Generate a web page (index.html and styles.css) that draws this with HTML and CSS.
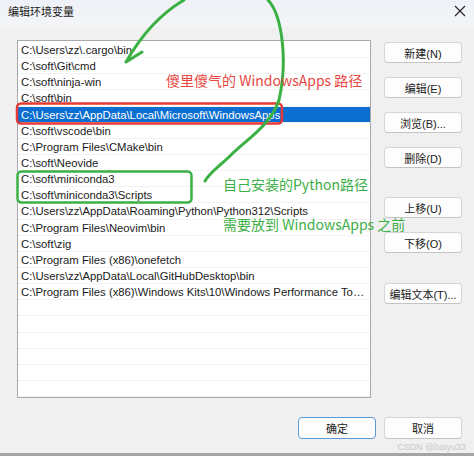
FILE: index.html
```html
<!DOCTYPE html>
<html lang="zh-CN">
<head>
  <meta charset="UTF-8" />
  <title>编辑环境变量</title>
  <link rel="stylesheet" href="styles.css">
</head>
<body>
  <div class="dialog">
    <div class="titlebar">
      <span class="title">编辑环境变量</span>
      <svg class="close" width="12" height="12" viewBox="0 0 12 12">
        <path d="M1 1 L11 11 M11 1 L1 11" stroke="#222" stroke-width="1.1" fill="none" />
      </svg>
    </div>

    <div class="main">
      <div class="list">
        <div class="row">C:\Users\zz\.cargo\bin</div>
        <div class="row">C:\soft\Git\cmd</div>
        <div class="row">C:\soft\ninja-win</div>
        <div class="row">C:\soft\bin</div>
        <div class="row selected">C:\Users\zz\AppData\Local\Microsoft\WindowsApps</div>
        <div class="row">C:\soft\vscode\bin</div>
        <div class="row">C:\Program Files\CMake\bin</div>
        <div class="row">C:\soft\Neovide</div>
        <div class="row">C:\soft\miniconda3</div>
        <div class="row">C:\soft\miniconda3\Scripts</div>
        <div class="row">C:\Users\zz\AppData\Roaming\Python\Python312\Scripts</div>
        <div class="row">C:\Program Files\Neovim\bin</div>
        <div class="row">C:\soft\zig</div>
        <div class="row">C:\Program Files (x86)\onefetch</div>
        <div class="row">C:\Users\zz\AppData\Local\GitHubDesktop\bin</div>
        <div class="row">C:\Program Files (x86)\Windows Kits\10\Windows Performance Toolkit\</div>
        <div class="row"></div>
        <div class="row"></div>
        <div class="row"></div>
        <div class="row"></div>
        <div class="row"></div>
        <div class="row"></div>
      </div>

      <div class="side">
        <div class="group">
          <button class="btn">新建(N)</button>
          <button class="btn">编辑(E)</button>
          <button class="btn">浏览(B)...</button>
          <button class="btn">删除(D)</button>
        </div>
        <div class="group move">
          <button class="btn">上移(U)</button>
          <button class="btn">下移(O)</button>
        </div>
        <button class="btn text-edit">编辑文本(T)...</button>
      </div>
    </div>

    <div class="footer">
      <button class="btn default">确定</button>
      <button class="btn">取消</button>
    </div>
    <div class="watermark">CSDN @baiyu33</div>
  </div>

  <!-- annotations drawn over the screenshot -->
  <svg class="marks" width="474" height="456" viewBox="0 0 474 456">
    <rect x="17" y="103.5" width="265" height="20" rx="4" stroke="#e53a35" stroke-width="2.5" fill="none" />
    <rect x="17.5" y="171.5" width="174" height="31" rx="4" stroke="#3bb143" stroke-width="2.5" fill="none" />
    <path d="M184 0 Q150 20 126 62 M126 62 L142 52" stroke="#3bb143" stroke-width="3" fill="none" stroke-linecap="round" />
    <path d="M268 0 C282 15 288 60 279 100 C271 125 246 140 231 155 C221 165 210 172 205 181" stroke="#3bb143" stroke-width="3" fill="none" stroke-linecap="round" />
  </svg>
  <div class="note red">傻里傻气的 WindowsApps 路径</div>
  <div class="note green first">自己安装的Python路径</div>
  <div class="note green second">需要放到 WindowsApps 之前</div>
</body>
</html>
```

FILE: styles.css
```css
body {
  margin: 0;
  width: 474px;
  height: 456px;
  overflow: hidden;
  background: #a4a4a4;
  font-family: 'Liberation Sans', 'Noto Sans CJK SC', sans-serif;
  font-size: 12px;
  color: #1a1a1a;
}
.dialog {
  height: 453px;
  background: #f0f0f0;
  display: flex;
  flex-direction: column;
  position: relative;
}
.titlebar {
  height: 27px;
  background: linear-gradient(to bottom, #eef1f7, #f4f5f8);
  display: flex;
  align-items: center;
  justify-content: space-between;
  padding: 0 8px 5px 8px;
  box-sizing: border-box;
}
.title {
  font-family: 'Noto Sans CJK SC', sans-serif;
  font-size: 11px;
}
.main {
  display: flex;
  gap: 13px;
  padding: 13px 12px 0 17px;
}
.list {
  width: 354px;
  height: 358px;
  box-sizing: border-box;
  background: #fff;
  border: 1px solid #a9a9a9;
  padding-top: 1px;
  overflow: hidden;
}
.row {
  height: 16.15px;
  line-height: 16px;
  padding: 0 5px 0 3px;
  box-sizing: border-box;
  border-bottom: 1px solid #f2f2f2;
  white-space: nowrap;
  overflow: hidden;
  text-overflow: ellipsis;
  font-size: 11.3px;
}
.row.selected {
  background: #0b6ed0;
  color: #fff;
}
.side {
  width: 78px;
  padding-top: 2px;
  display: flex;
  flex-direction: column;
}
.group {
  display: flex;
  flex-direction: column;
  gap: 14px;
}
.group.move {
  margin-top: 29px;
}
.text-edit {
  margin-top: 30px;
}
.btn {
  height: 21px;
  width: 78px;
  padding: 0;
  background: #fdfdfd;
  border: 1px solid #d6d6d6;
  border-bottom-color: #c4c4c4;
  border-radius: 4px;
  font-family: 'Liberation Sans', 'Noto Sans CJK SC', sans-serif;
  font-size: 11px;
  color: #1a1a1a;
  white-space: nowrap;
}
.footer {
  display: flex;
  justify-content: flex-end;
  gap: 8px;
  padding: 19px 12px 0 0;
}
.footer .btn {
  width: 78px;
  height: 22px;
}
.btn.default {
  border: 1px solid #5b9bd5;
}
.watermark {
  position: absolute;
  right: 8px;
  bottom: 1px;
  font-size: 9px;
  color: #c8c8c8;
}
.marks {
  position: absolute;
  top: 0;
  left: 0;
  pointer-events: none;
}
.note {
  position: absolute;
  font-family: 'Noto Sans CJK SC', sans-serif;
  font-size: 14px;
  line-height: 16px;
  white-space: nowrap;
}
.note.red {
  color: #e8473f;
  left: 166px;
  top: 72px;
}
.note.green {
  color: #3daf47;
  left: 223px;
}
.note.first {
  top: 176px;
}
.note.second {
  top: 216px;
}
```
